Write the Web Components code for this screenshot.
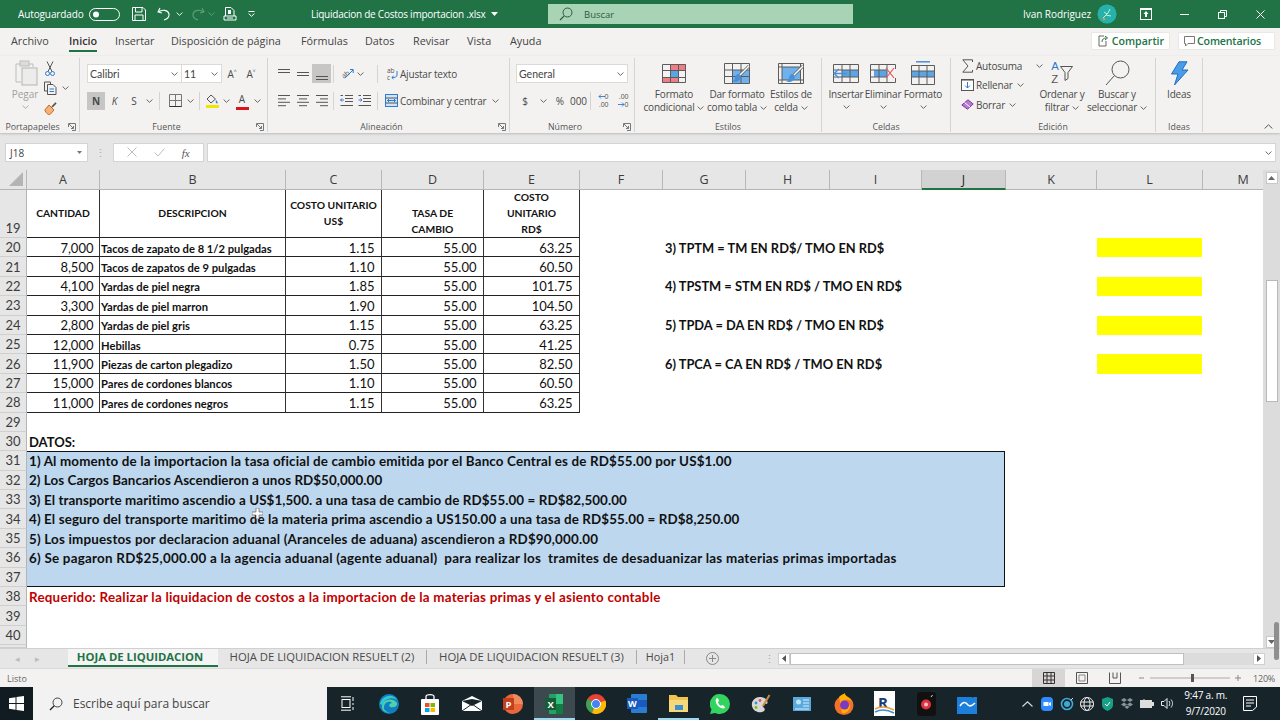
<!DOCTYPE html>
<html lang="es"><head><meta charset="utf-8"><title>Excel</title>
<style>
html,body{margin:0;padding:0;width:1280px;height:720px;overflow:hidden;background:#e6e6e6}
body{display:flex;flex-direction:column;font-family:"Open Sans","Noto Sans",sans-serif;position:relative}
</style></head><body>
<x-titlebar></x-titlebar>
<x-tabs></x-tabs>
<x-ribbon></x-ribbon>
<x-formula></x-formula>
<x-sheet></x-sheet>
<x-sheettabs></x-sheettabs>
<x-status></x-status>
<x-taskbar></x-taskbar>
<script>
const UI='"Open Sans","Noto Sans",sans-serif', CAL='Lato,"Liberation Sans",sans-serif';
function def(name,css,html){customElements.define(name,class extends HTMLElement{
  connectedCallback(){ if(this.shadowRoot) return;
    const s=this.attachShadow({mode:'open'});
    s.innerHTML='<style>'+css+'</style>'+(typeof html==='function'?html(this):html);}
});}
const svg=(w,h,b,extra='')=>`<svg width="${w}" height="${h}" viewBox="0 0 ${w} ${h}" fill="none" ${extra}>${b}</svg>`;
const ch=(c='#666')=>svg(7,4,`<path d="M.6.5 3.5 3.4 6.4.5" stroke="${c}"/>`);
const bx=(w,inner,st='')=>`<span class="bx" style="width:${w}px;${st}">${inner}</span>`;
const sep=(ml,mr)=>`<span class="vs" style="margin:0 ${mr}px 0 ${ml}px"></span>`;

/* ---------- title bar ---------- */
def('x-titlebar',`
:host{display:flex;align-items:center;height:28px;background:#217346;color:#fff;font:10px ${UI};flex:none;box-sizing:border-box;padding-left:18px;white-space:nowrap}
.bx{display:inline-flex;justify-content:center;align-items:center;flex:none}
.sb{width:305px;height:20px;background:#a8d3b4;display:flex;align-items:center;color:#2d5b41;font-size:9.5px;box-sizing:border-box;padding-left:11px;gap:11px;flex:none}
`,()=>`
<span style="width:65px;flex:none;letter-spacing:-.12px">Autoguardado</span>
<span class="bx" style="margin-left:6px;width:31px">${svg(31,13,`<rect x=".5" y=".5" width="30" height="12" rx="6" stroke="#fff"/><circle cx="7" cy="6.5" r="3" fill="#fff"/>`)}</span>
<span class="bx" style="width:14px;margin-left:12px">${svg(14,14,`<path d="M.5.5H11L13.5 3V13.5H.5Z" stroke="#fff"/><path d="M3.5.5V5H10V.5M3 13.5V8H11V13.5" stroke="#fff"/>`)}</span>
<span class="bx" style="width:14px;margin-left:11px">${svg(14,14,`<path d="M3 1 1 5 5 6M1.5 5C5 2 11 3 12 7 12.5 10 10 12 7 13" stroke="#fff" stroke-width="1.1"/>`)}</span>
<span class="bx" style="width:12px;margin-left:2px">${ch('#dfe')}</span>
<span class="bx" style="width:14px;margin-left:6px">${svg(14,14,`<path d="M11 1 13 5 9 6M12.5 5C9 2 3 3 2 7 1.5 10 4 12 7 13" stroke="#5e9c79" stroke-width="1.1"/>`)}</span>
<span class="bx" style="width:10px;margin-left:1px">${ch('#5e9c79')}</span>
<span class="bx" style="width:14px;margin-left:7px">${svg(14,15,`<path d="M2.5.5H8L11 3.5V9M2.5.5V9" stroke="#fff"/><path d="M1 9H13V13H1Z" stroke="#fff"/><path d="M4 11H10" stroke="#fff"/><path d="M5 3H8V7H5Z" fill="#fff"/>`)}</span>
<span class="bx" style="width:12px;margin-left:8px">${svg(7,6,`<path d="M.5.5H6.5M.6 2.5 3.5 5.3 6.4 2.5" stroke="#fff"/>`)}</span>
<span style="margin-left:54px;width:180px;flex:none;letter-spacing:-.25px">Liquidacion de Costos importacion .xlsx</span>
<span class="bx" style="width:7px">${svg(7,4,`<path d="M0 0H7L3.5 4Z" fill="#fff"/>`)}</span>
<span class="sb" style="margin-left:50px">${svg(14,14,`<circle cx="8.5" cy="5.5" r="4.5" stroke="#2d5b41"/><path d="M5.2 8.8 1 13" stroke="#2d5b41" stroke-width="1.2"/>`)}<span>Buscar</span></span>
<span style="margin-left:170px;width:68px;flex:none;letter-spacing:-.05px">Ivan Rodriguez</span>
<span class="bx" style="width:20px;margin-left:6px">${svg(20,20,`<circle cx="10" cy="10" r="9.5" fill="#1aa6a6"/><circle cx="10" cy="10" r="9.5" fill="#2fb9ae" opacity=".6"/><path d="M6 14 11 9 13 5M9 11 14 12M7 8 10 10" stroke="#c6f0d8"/><circle cx="7" cy="15" r="1.3" fill="#e09a3c"/>`)}</span>
<span class="bx" style="width:12px;margin-left:23px">${svg(12,12,`<rect width="12" height="12" fill="#fff"/><rect x="1" y="2" width="10" height="9" fill="#217346"/><path d="M6 3 3.5 6H5V9H7V6H8.5Z" fill="#fff"/>`)}</span>
<span class="bx" style="width:9px;margin-left:28px">${svg(9,1,`<rect width="9" height="1" fill="#fff"/>`)}</span>
<span class="bx" style="width:9px;margin-left:29px">${svg(9,9,`<rect x=".5" y="2.5" width="6" height="6" stroke="#fff"/><path d="M2.5 2.5V.5H8.5V6.5H6.5" stroke="#fff"/>`)}</span>
<span class="bx" style="width:9px;margin-left:29px">${svg(9,9,`<path d="M.5.5 8.5 8.5M8.5.5.5 8.5" stroke="#fff"/>`)}</span>
`);

/* ---------- ribbon tabs ---------- */
def('x-tabs',`
:host{display:flex;align-items:flex-start;height:28px;background:#f3f2f1;color:#444;font:10.8px ${UI};flex:none;box-sizing:border-box;padding-left:11px;white-space:nowrap;position:relative}
.t{display:block;flex:none;height:28px;line-height:26px;box-sizing:border-box}
.on{font-weight:600;color:#333;position:relative}
.on::after{content:"";position:absolute;left:0;width:28px;top:22px;height:2px;background:#217346}
.btn{flex:none;height:18px;margin-top:4px;background:#fff;border:1px solid #e9e8e6;display:flex;align-items:center;justify-content:center;gap:4px;color:#217346;font-weight:600;box-sizing:border-box;font-size:10.6px;border-radius:1px}
`,()=>`
<span class="t" style="width:58px">Archivo</span><span class="t on" style="width:46px">Inicio</span><span class="t" style="width:56px">Insertar</span><span class="t" style="width:130px">Disposición de página</span><span class="t" style="width:64px">Fórmulas</span><span class="t" style="width:48px">Datos</span><span class="t" style="width:54px">Revisar</span><span class="t" style="width:43px">Vista</span><span class="t" style="width:581px">Ayuda</span>
<span class="btn" style="width:79px">${svg(11,12,`<path d="M7 1H2V11H9V6" stroke="#666"/><path d="M5 7C5 4 7 3 9 3M8 1 10.5 3 8 5" stroke="#217346"/>`)}<span>Compartir</span></span>
<span class="btn" style="width:97px;margin-left:8px;gap:2px;letter-spacing:-.15px;justify-content:flex-start;padding-left:5px">${svg(11,11,`<path d="M.5.5H10.5V7.5H4L1.5 10V7.5H.5Z" stroke="#777"/>`)}<span>Comentarios</span></span>
`);

/* ---------- ribbon group ---------- */
def('x-group',`
:host{display:flex;flex-direction:column;height:74px;margin:2px 0 1px;box-sizing:border-box;border-right:1px solid #d6d4d2;flex:none;position:relative}
.c{height:62px;flex:none;display:block}
.l{font:8.8px ${UI};color:#555;text-align:center;line-height:12px;margin-top:1px;white-space:nowrap}
.m{position:absolute;right:3px;bottom:1px;line-height:0}
`,h=>{const e=h.hasAttribute('launch');return `<div class="c"><slot></slot></div><div class="l" style="padding-right:${e?14:0}px">${h.getAttribute('label')}</div>${e?`<span class="m">${svg(8,8,`<path d="M.5 4V.5H7.5V7.5H4M1 1 5.5 5.5M5.5 3V5.5H3" stroke="#777"/>`)}</span>`:''}`;});

/* ---------- big ribbon button ---------- */
def('x-big',`
:host{display:flex;flex-direction:column;align-items:center;flex:none;font:10px/13px ${UI};color:#4a4a4a;white-space:nowrap;letter-spacing:-.2px}
.i{height:30px;display:flex;align-items:center;justify-content:center}
`,()=>`<div class="i"><slot name="icon"></slot></div><slot></slot>`);

const G='#5c5c5c';
const grid=(w,h,fills='',extra='')=>svg(w,h,`${fills}<path d="M.5.5H${w-.5}V${h-.5}H.5ZM.5 ${Math.round(h/3)+.5}H${w-.5}M.5 ${Math.round(2*h/3)+.5}H${w-.5}M${Math.round(w/3)+.5}.5V${h-.5}M${Math.round(2*w/3)+.5}.5V${h-.5}" stroke="${G}"/>${extra}`);
const brush=`<path d="M25 3 16 12" stroke="#666" stroke-width="3"/><path d="M25 3 16 12" stroke="#fff" stroke-width="1.4"/><path d="M15 11C12 11 11 13 11 15 11 17 9 18 8 18 11 20 16 19 17 14Z" fill="#4a90d9"/>`;
function lines(n,x,off){let p='';for(let i=0;i<n;i++){const o=x[i%x.length];p+=`M${o} ${off+i*3+.5}H${14-o}`;}return svg(14,13,`<path d="${p}" stroke="#555"/>`);}
function alignL(kind){let p='';[0,1,2,3].forEach(i=>{const long=i%2===0,w=long?12:8,x=kind==='l'?1:kind==='c'?(14-w)/2:13-w;p+=`M${x} ${i*3.4+1.5}H${x+w}`;});return svg(14,13,`<path d="${p}" stroke="#555"/>`);}
const arL=svg(7,5,`<path d="M7 2.5H1M3 .5 1 2.5 3 4.5" stroke="#2b7cd3" stroke-width=".9"/>`);
const arR=svg(7,5,`<path d="M0 2.5H6M4 .5 6 2.5 4 4.5" stroke="#2b7cd3" stroke-width=".9"/>`);

def('x-ribbon',`
:host{display:flex;height:77px;background:#f3f2f1;flex:none;box-sizing:border-box;position:relative;color:#4a4a4a;font:10px ${UI};box-shadow:0 1px 2px #bbb;z-index:1}
.bx{display:inline-flex;justify-content:center;align-items:center;flex:none;height:18px}
.vs{display:inline-block;width:1px;height:18px;background:#d6d4d2;flex:none}
.r{display:flex;align-items:center;white-space:nowrap;height:19px}
.sel{display:flex;align-items:center;justify-content:space-between;height:19px;background:#fff;border:1px solid #dcdad8;box-sizing:border-box;font:10.5px ${CAL};color:#444;padding:0 3px 0 2px;flex:none}
.tx{letter-spacing:-.2px}
svg{display:block}
.col{display:flex;flex-direction:column}
.top{display:flex;align-items:flex-start}
.cap{position:absolute;right:7px;bottom:4px}
.az{display:flex;align-items:center;gap:1px}
.az b{display:block;font:400 11.3px/13px "Liberation Sans",sans-serif}
.dec{display:flex;flex-direction:column;align-items:flex-end;font:7px/8px "Liberation Sans",sans-serif;color:#555}
.dec span{display:flex;align-items:center}
`,()=>`
<x-group label="Portapapeles" launch style="width:80px"><div class="top">
  <x-big style="width:36px;margin-left:7px;color:#a8a8a8">
    <span slot="icon">${svg(25,26,`<path d="M3 4H8M16 4H20V7M3 4V22H8" stroke="#bdbdbd"/><rect x="7" y="1" width="9" height="5" fill="#ddd" stroke="#bdbdbd"/><rect x="9" y="8" width="15" height="17" fill="#ececec" stroke="#b4b4b4"/>`)}</span>
    <span style="color:#a0a0a0;letter-spacing:0">Pegar</span><span style="line-height:10px;margin-top:4px">${ch('#aaa')}</span></x-big>
  <div class="col">
    <div class="r" style="height:20px">${bx(14,svg(10,15,`<circle cx="2.5" cy="12.5" r="2" stroke="#2b7cd3"/><circle cx="7.5" cy="12.5" r="2" stroke="#2b7cd3"/><path d="M3 10.5 8 .5M7 10.5 2 .5" stroke="#555"/>`))}</div>
    <div class="r" style="height:20px">${bx(14,svg(13,14,`<path d="M.5 1H6.5V3M.5 1V10H3.5" stroke="#555"/><path d="M3.5 3.5H9L12 6.5V13.5H3.5Z" stroke="#555" fill="#f3f2f1"/><path d="M5.5 8H10M5.5 10.5H10" stroke="#2b7cd3"/>`))}${bx(16,ch())}</div>
    <div class="r" style="height:20px">${bx(14,svg(13,13,`<path d="M.8 8 5 3 10 8 6 12.5C4 13 2 11 .8 8Z" fill="#f3b27a" stroke="#c8691c"/><path d="M8 5 12 .8" stroke="#555" stroke-width="1.8"/>`))}</div>
  </div></div></x-group>

<x-group label="Fuente" launch style="width:188px">
  <div class="r" style="margin:6px 0 0 7px"><span class="sel" style="width:95px"><span>Calibri</span>${ch()}</span><span class="sel" style="width:40px;border-left:0"><span>11</span>${ch()}</span>${bx(20,`<span style="font:14px ${UI};color:#444">A</span><span style="font:7px ${UI};margin:-8px 0 0 0;color:#2b7cd3">˄</span>`)}${bx(18,`<span style="font:12px ${UI};color:#444">A</span><span style="font:7px ${UI};margin:-7px 0 0 0;color:#2b7cd3">˅</span>`)}</div>
  <div class="r" style="margin:8px 0 0 7px">
  ${bx(18,`<b style="font:700 12px ${UI};color:#333">N</b>`,'background:#c8c6c4')}${bx(19,`<i style="font:italic 10.5px ${UI};color:#444">K</i>`)}${bx(20,`<span style="font:10.5px ${UI};color:#444;text-decoration:underline">S</span>`)}${bx(10,ch())}${sep(5,4)}${bx(22,svg(13,13,`<path d="M.5.5H12.5V12.5H.5ZM.5 6.5H12.5M6.5.5V12.5" stroke="#777"/><path d="M.5 12.5H12.5" stroke="#333"/>`))}${bx(8,ch())}${sep(5,4)}${bx(17,`<span class="col">${svg(13,10,`<path d="M5 1 1 5 5 9 9.5 5Z" stroke="#555"/><path d="M10 6C11 7 12.5 9 11 9.5 9.5 9 9.5 7.5 10 6Z" fill="#2b7cd3"/>`)}<span style="display:block;width:13px;height:3px;background:#f2e600;margin-top:1px"></span></span>`)}${bx(10,ch())}${bx(22,`<span class="col" style="align-items:center"><span style="font:10.5px/9px ${UI};color:#444">A</span><span style="display:block;width:13px;height:3px;background:#d8151c;margin-top:1px"></span></span>`)}${bx(8,ch())}</div>
</x-group>

<x-group label="Alineación" launch style="width:242px">
  <div class="r" style="margin:6px 0 0 7px">
  ${bx(18,lines(2,[1],2))}${bx(19,lines(2,[1],5))}${bx(19,lines(2,[1],9),'background:#c8c6c4;height:19px')}${sep(2,4)}${bx(18,svg(14,13,`<text x="1" y="10" font-size="7" fill="#555" transform="rotate(-38 5 7)" font-family="${UI}">ab</text><path d="M5 11 13 3M10 2.5H13.2V6" stroke="#2b7cd3"/>`))}${bx(8,ch())}${sep(13,5)}${bx(17,svg(12,14,`<text x="1" y="6" font-size="6.5" fill="#555" font-family="${UI}">ab</text><text x="1" y="13" font-size="6.5" fill="#555" font-family="${UI}">c</text><path d="M11 4V8C11 10 9 10.5 6 10.5M7.5 9 5.8 10.5 7.5 12" stroke="#2b7cd3"/>`))}<span class="tx">Ajustar texto</span></div>
  <div class="r" style="margin:8px 0 0 7px">
  ${bx(18,alignL('l'))}${bx(19,alignL('c'))}${bx(19,alignL('r'))}${sep(2,3)}${bx(18,svg(13,11,`<path d="M5 .5H13M5 3.5H13M5 6.5H13M.5 10.5H13M.5.5H3" stroke="#555"/><path d="M4 5H.5M2 3.5.5 5 2 6.5" stroke="#2b7cd3"/>`))}${bx(18,svg(13,11,`<path d="M5 .5H13M5 3.5H13M5 6.5H13M.5 10.5H13M.5.5H3" stroke="#555"/><path d="M.5 5H4M2.5 3.5 4 5 2.5 6.5" stroke="#2b7cd3"/>`))}${sep(4,5)}${bx(17,svg(13,13,`<rect x=".5" y=".5" width="12" height="12" fill="#cfe4f7" stroke="#2b7cd3"/><path d="M.5 4H12.5M.5 9H12.5" stroke="#555"/><path d="M2.5 6.5H10.5M4 5 2.5 6.5 4 8M9 5 10.5 6.5 9 8" stroke="#2b7cd3"/>`))}<span class="tx" style="width:84px">Combinar y centrar</span><span style="margin-left:8px">${ch()}</span></div>
</x-group>

<x-group label="Número" launch style="width:125px">
  <div class="r" style="margin:6px 0 0 6px"><span class="sel" style="width:112px;font:10px ${UI};color:#444"><span>General</span>${ch()}</span></div>
  <div class="r" style="margin:8px 0 0 6px">${bx(18,`<span style="font:17px ${UI};color:#444">$</span>`)}${bx(14,ch(),'margin-left:2px')}${bx(20,`<span style="font:17px ${UI};color:#444">%</span>`)}${bx(17,`<span style="font:8px ${UI};color:#666;letter-spacing:-.3px">000</span>`)}${sep(3,2)}${bx(20,`<span class="dec"><span>${arL}0</span><span>.00</span></span>`)}${bx(20,`<span class="dec"><span>.00</span><span>${arR}0</span></span>`)}</div>
</x-group>

<x-group label="Estilos" style="width:187px"><div class="top" style="margin-left:5px">
  <x-big style="width:68px"><span slot="icon">${grid(24,19,`<rect width="16" height="6" x="8" y="0" fill="#ee7d85"/><rect x="0" y="13" width="16" height="6" fill="#ee7d85"/><rect x="8" y="6" width="8" height="7" fill="#5ba4e6"/>`)}</span><span>Formato</span><span style="display:flex;align-items:center;gap:3px">condicional ${ch()}</span></x-big>
  <x-big style="width:58px"><span slot="icon">${svg(27,21,`<rect x="8.5" y="7" width="17" height="13" fill="#6fb1ea"/><path d="M.5.5H25.5V20.5H.5ZM.5 7H25.5M.5 13.5H25.5M8.5.5V20.5M17 .5V20.5" stroke="${G}"/>${brush}`)}</span><span>Dar formato</span><span style="display:flex;align-items:center;gap:3px">como tabla ${ch()}</span></x-big>
  <x-big style="width:50px"><span slot="icon">${svg(27,21,`<rect x="4" y="4" width="19" height="13" fill="#6fb1ea"/><path d="M.5.5H25.5V20.5H.5ZM.5 4H25.5M.5 17H25.5M4 .5V20.5M22.5 .5V20.5" stroke="${G}"/>${brush}`)}</span><span>Estilos de</span><span style="display:flex;align-items:center;gap:3px">celda ${ch()}</span></x-big>
</div></x-group>

<x-group label="Celdas" style="width:129px"><div class="top" style="margin-left:4px">
  <x-big style="width:40px"><span slot="icon">${svg(26,19,`<rect x="9" y="6" width="16" height="7" fill="#5ba4e6"/><path d="M.5.5H25.5V18.5H.5ZM.5 6H25.5M.5 13H25.5M9 .5V18.5M17 .5V18.5" stroke="${G}"/><path d="M1 9.5H14M6 5 1 9.5 6 14" stroke="#4a90d9" stroke-width="1.5"/>`)}</span><span>Insertar</span><span style="margin-top:4px">${ch()}</span></x-big>
  <x-big style="width:34px"><span slot="icon">${svg(26,19,`<rect x="4" y="6" width="13" height="7" fill="#5ba4e6"/><path d="M.5.5H25.5M.5 18.5H25.5M.5.5V18.5M25.5.5V5M25.5 14V18.5M.5 6H16M.5 13H16M9 .5V18.5M17 .5V18.5" stroke="${G}"/><path d="M16 4 24 14M24 4 16 14" stroke="#e0555c" stroke-width="1.2"/>`)}</span><span>Eliminar</span><span style="margin-top:4px">${ch()}</span></x-big>
  <x-big style="width:46px"><span slot="icon">${svg(24,24,`<path d="M5 .8H19" stroke="#4a90d9" stroke-width="1.5"/><rect x=".5" y="10" width="23" height="6" fill="#5ba4e6"/><path d="M.5 4.5H23.5V23.5H.5ZM.5 10H23.5M.5 16H23.5M8 4.5V23.5M16 4.5V23.5" stroke="${G}"/>`)}</span><span>Formato</span><span style="margin-top:4px">${ch()}</span></x-big>
</div></x-group>

<x-group label="Edición" style="width:205px"><div class="top" style="margin-left:8px">
  <div class="col" style="width:85px;margin-top:-2px;flex:none">
    <div class="r" style="height:19.5px">${bx(17,svg(11,14,`<path d="M10.5 3V.8H.8L6 7 .8 13.2H10.5V11" stroke="#555"/>`))}<span class="tx">Autosuma</span><span style="margin-left:14px">${ch()}</span></div>
    <div class="r" style="height:19.5px">${bx(17,svg(13,12,`<rect x=".5" y=".5" width="12" height="11" fill="#fff" stroke="#555"/><path d="M.5.8H12.5" stroke="#555" stroke-width="1.5"/><path d="M6.5 3V9M4 6.5 6.5 9 9 6.5" stroke="#2b7cd3"/>`))}<span class="tx">Rellenar</span><span style="margin-left:4px">${ch()}</span></div>
    <div class="r" style="height:19.5px">${bx(17,svg(13,11,`<path d="M7 .8 12.2 5 6.5 10.2 .8 6Z" fill="#b57bd1" stroke="#7d3c9e"/><path d="M3.5 3.5 9 8" stroke="#fff"/>`))}<span class="tx">Borrar</span><span style="margin-left:4px">${ch()}</span></div>
  </div>
  <x-big style="width:36px"><span slot="icon" class="az"><span style="display:block"><b style="color:#2b7cd3">A</b><b style="color:#555">Z</b></span>${svg(13,15,`<path d="M.5.5H12.5L8 6.5V12.5L5 14.5V6.5Z" stroke="#555"/>`)}</span><span>Ordenar y</span><span style="display:flex;align-items:center;gap:3px">filtrar ${ch()}</span></x-big>
  <x-big style="width:74px"><span slot="icon">${svg(25,26,`<circle cx="15.5" cy="9.5" r="8.5" stroke="#555"/><path d="M9.5 15.5 1 25" stroke="#555"/>`)}</span><span>Buscar y</span><span style="display:flex;align-items:center;gap:3px">seleccionar ${ch()}</span></x-big>
</div></x-group>

<x-group label="Ideas" style="width:47px"><x-big><span slot="icon">${svg(19,25,`<path d="M9 .8H17L12 9H18L4.5 24 8 13H1.5Z" fill="#4a9be8" stroke="#1f6fc0"/>`)}</span><span>Ideas</span></x-big></x-group>
<span class="cap">${svg(9,5,`<path d="M.6 4.5 4.5.8 8.4 4.5" stroke="#555"/>`)}</span>
`);

/* ---------- formula bar ---------- */
def('x-formula',`
:host{display:flex;align-items:center;flex:none;height:37px;background:#e6e6e6;box-sizing:border-box;padding:10px 4px 8px 5px;color:#444;font:10px ${UI}}
.b{height:19px;background:#fff;border:1px solid #d4d4d4;box-sizing:border-box;display:flex;align-items:center;flex:none}
`,()=>`
<span class="b" style="width:83px;padding:0 5px 0 4px;justify-content:space-between;font:10.5px ${UI};color:#444"><span>J18</span>${svg(5,3,`<path d="M0 0H5L2.5 3Z" fill="#777"/>`)}</span>
<span style="width:25px;text-align:center;color:#aaa;font-size:11px;flex:none;line-height:12px">⋮</span>
<span class="b" style="width:91px;justify-content:space-around;padding:0 5px"><span>${svg(10,10,`<path d="M.5.5 9.5 9.5M9.5.5.5 9.5" stroke="#bdbdbd"/>`)}</span><span>${svg(11,9,`<path d="M.5 4.5 4 8 10.5.5" stroke="#bdbdbd"/>`)}</span><span style="font:italic 11px 'Liberation Serif',serif;color:#555">fx</span></span>
<span class="b" style="flex:1;margin-left:3px;justify-content:flex-end;padding-right:3px">${ch()}</span>
`);

/* ---------- sheet ---------- */
const COLS=[['A',73],['B',186],['C',96],['D',102],['E',96],['F',83],['G',83],['H',84],['I',92],['J',84],['K',91],['L',106],['M',81]];
const colIx=l=>COLS.findIndex(c=>c[0]===l)+2;
const rowIx=r=>r-17;  /* row 19 -> line 2 */
function cell(c,r,txt,cls='',st=''){return `<div class="cell ${cls}" style="grid-column:${colIx(c)};grid-row:${rowIx(r)};${st}">${txt}</div>`;}
const DATA=[[7000,'Tacos de zapato de 8 1/2 pulgadas','1.15','63.25'],[8500,'Tacos de zapatos de 9 pulgadas','1.10','60.50'],[4100,'Yardas de piel negra','1.85','101.75'],[3300,'Yardas de piel marron','1.90','104.50'],[2800,'Yardas de piel gris','1.15','63.25'],[12000,'Hebillas','0.75','41.25'],[11900,'Piezas de carton plegadizo','1.50','82.50'],[15000,'Pares de cordones blancos','1.10','60.50'],[11000,'Pares de cordones negros','1.15','63.25']];
const NOTES=[['1) Al momento de la importacion la tasa oficial de cambio emitida por el Banco Central es de RD$55.00 por US$1.00',.143],['2) Los Cargos Bancarios Ascendieron a unos RD$50,000.00',.05],['3) El transporte maritimo ascendio a US$1,500. a una tasa de cambio de RD$55.00 = RD$82,500.00',.076],['4) El seguro del transporte maritimo de la materia prima ascendio a US150.00 a una tasa de RD$55.00 = RD$8,250.00',.117],['5) Los impuestos por declaracion aduanal (Aranceles de aduana) ascendieron a RD$90,000.00',.187],['6) Se pagaron RD$25,000.00 a la agencia aduanal (agente aduanal)&nbsp; para realizar los&nbsp; tramites de desaduanizar las materias primas importadas',.238]];
const FORMS=[[20,'3) TPTM = TM EN RD$/ TMO EN RD$'],[22,'4) TPSTM = STM EN RD$ / TMO EN RD$'],[24,'5) TPDA = DA EN RD$ / TMO EN RD$'],[26,'6) TPCA = CA EN RD$ / TMO EN RD$']];
def('x-sheet',`
:host{display:flex;height:478px;flex:none;background:#fff;position:relative;font-family:${CAL};color:#111}
.g{display:grid;width:1263px;height:478px;grid-template-columns:27px ${COLS.map(c=>c[1]+'px').join(' ')};grid-template-rows:20px 48px repeat(21,19.4px) 1fr;flex:none;overflow:hidden}
.cell{display:flex;align-items:center;white-space:nowrap;min-width:0;font-size:12.6px;box-sizing:border-box}
.hc{background:#e6e6e6;justify-content:center;color:#3c3c3c;border-right:1px solid #b8b8b8;border-bottom:1px solid #b4b4b4;font:12.5px ${UI}}
.hc.sel{background:#d2d2d2;border-bottom:2px solid #217346;color:#222}
.rh{background:#e6e6e6;justify-content:center;color:#3c3c3c;border-bottom:1px solid #cfcfcf;border-right:1px solid #b4b4b4;font-size:13px}
.corner{background:#e6e6e6;grid-column:1;grid-row:1;border-right:1px solid #b8b8b8;border-bottom:1px solid #b4b4b4;display:flex;align-items:flex-end;justify-content:flex-end;padding:0 3px 3px 0;box-sizing:border-box}
.n{justify-content:flex-end;padding:1px 6.5px 0 0;border-bottom:1px solid #222;border-right:1px solid #333;font-size:13px}
.d{font-weight:700;font-size:11.2px;padding-left:1px;border-bottom:1px solid #222;border-right:1px solid #333;padding-top:2px}
.th{font-weight:700;font-size:10.3px;flex-direction:column;justify-content:center;text-align:center;line-height:16px;border-bottom:1px solid #222;border-right:1px solid #333;padding-bottom:2px}
.b{font-weight:700;font-size:13.4px;overflow:visible;padding-left:2px}
.f{font-weight:700;font-size:12.85px;overflow:visible;padding-left:2px}
.box{grid-column:2/12;grid-row:14/21;background:#bdd7ee;border:1px solid #111;border-left:0;box-sizing:border-box;margin-right:1px}
.y{background:#ffff00;margin-right:1px}
.vs{width:17px;flex:none;background:#dcdcdc;position:relative;display:flex;flex-direction:column;align-items:center}
.ar{width:12px;height:12px;background:#fff;border:1px solid #c8c8c8;box-sizing:border-box;display:flex;align-items:center;justify-content:center;flex:none}
.th1{width:12px;background:#fff;border:1px solid #b8b8b8;box-sizing:border-box;flex:none;height:122px;margin-top:96px}
.cur{position:absolute;left:252px;top:333px}
.blob{position:absolute;left:1274px;top:452px;width:5px;height:38px;border-radius:3px;background:#8f8f8f}
`,()=>{
 let h='<div class="corner">'+svg(14,14,'<path d="M14 0V14H0Z" fill="#b4b4b4"/>')+'</div>';
 COLS.forEach(([c])=>h+=`<div class="cell hc ${c==='J'?'sel':''}" style="grid-column:${colIx(c)};grid-row:1">${c}</div>`);
 for(let r=19;r<=40;r++) h+=`<div class="cell rh" style="grid-column:1;grid-row:${rowIx(r)};${r===19?'align-items:flex-end;padding-bottom:1px':''}">${r}</div>`;
 h+=`<div class="cell rh" style="grid-column:1;grid-row:${rowIx(41)}"></div>`;
 h+=cell('A',19,'CANTIDAD','th')+cell('B',19,'DESCRIPCION','th')+cell('C',19,'<span>COSTO UNITARIO</span><span>US$</span>','th','padding-bottom:1px')+cell('D',19,'<span>TASA DE</span><span>CAMBIO</span>','th','padding:14px 0 0')+cell('E',19,'<span>COSTO</span><span>UNITARIO</span><span>RD$</span>','th');
 DATA.forEach((d,i)=>{const r=20+i;h+=cell('A',r,d[0].toLocaleString('en-US'),'n','padding-right:5.5px')+cell('B',r,d[1],'d')+cell('C',r,d[2],'n')+cell('D',r,'55.00','n')+cell('E',r,d[3],'n');});
 FORMS.forEach(([r,t])=>{h+=cell('G',r,t,'f')+cell('L',r,'','y');});
 h+=cell('A',30,'DATOS:','b','font-size:13px');
 h+='<div class="box"></div>';
 NOTES.forEach(([t,ls],i)=>h+=cell('A',31+i,t,'b',`letter-spacing:${ls}px`));
 h+=cell('A',38,'Requerido: Realizar la liquidacion de costos a la importacion de la materias primas y el asiento contable','b','color:#c00000;letter-spacing:.23px');
 return `<div class="g">${h}</div><div class="vs"><div class="ar" style="margin-top:2px">${svg(7,4,'<path d="M0 4H7L3.5 0Z" fill="#666"/>')}</div><div class="th1"></div><div class="ar" style="margin-top:auto">${svg(7,4,'<path d="M0 0H7L3.5 4Z" fill="#666"/>')}</div></div><span class="blob"></span><span class="cur">${svg(11,11,'<path d="M4 0H7V4H11V7H7V11H4V7H0V4H4Z" fill="#fff" stroke="#666" stroke-width=".7"/>')}</span>`;
});

/* ---------- sheet tabs ---------- */
def('x-sheettabs',`
:host{display:flex;align-items:center;height:20px;flex:none;background:#e6e6e6;color:#4a4a4a;font:11.3px ${UI};white-space:nowrap;border-top:1px solid #d0d0d0;box-sizing:border-box}
.t{flex:none;height:18px;align-self:flex-start;display:flex;align-items:center;justify-content:center;box-sizing:border-box;padding-bottom:3px}
.a{background:#f4f4f4;color:#217346;font-weight:700;border-bottom:2px solid #217346;font-size:11.3px;padding:0 6px 1px 0}
.s{width:1px;height:14px;background:#aaa;flex:none;align-self:flex-start;margin-top:1px}
.hs{display:flex;align-items:center;flex:none;height:12px}
.ar{width:12px;height:12px;background:#fff;border:1px solid #cfcfcf;box-sizing:border-box;display:flex;align-items:center;justify-content:center;flex:none}
`,()=>`
<span style="width:68px;flex:none;color:#bbb;font-size:9px;display:flex;gap:15px;padding-left:15px;box-sizing:border-box"><span>◂</span><span>▸</span></span>
<span class="t a" style="width:150px">HOJA DE LIQUIDACION</span>
<span class="t" style="width:208px">HOJA DE LIQUIDACION RESUELT (2)</span><span class="s"></span>
<span class="t" style="width:209px">HOJA DE LIQUIDACION RESUELT (3)</span><span class="s"></span>
<span class="t" style="width:47px;font-size:10.8px">Hoja1</span><span class="s"></span>
<span style="width:55px;flex:none;display:flex;justify-content:center">${svg(13,13,`<circle cx="6.5" cy="6.5" r="6" stroke="#888"/><path d="M6.5 3V10M3 6.5H10" stroke="#888"/>`)}</span>
<span style="width:38px;flex:none;color:#aaa;box-sizing:border-box;padding-left:24px">⋮</span>
<span class="hs" style="width:487px;background:#dcdcdc"><span class="ar">${svg(4,7,'<path d="M4 0V7L0 3.5Z" fill="#555"/>')}</span><span style="width:394px;height:12px;background:#fff;border:1px solid #c0c0c0;box-sizing:border-box"></span><span class="ar" style="margin-left:auto">${svg(4,7,'<path d="M0 0V7L4 3.5Z" fill="#555"/>')}</span></span>
`);

/* ---------- status bar ---------- */
def('x-status',`
:host{display:flex;align-items:center;height:19px;flex:none;background:#f3f2f1;color:#666;font:9px ${UI};box-sizing:border-box;padding-left:7px;border-top:1px solid #dadada}
.v{width:33px;height:18px;display:flex;align-items:center;justify-content:center;flex:none}
`,()=>`
<span style="width:1025px;flex:none">Listo</span>
<span class="v" style="background:#d8d6d4">${svg(12,12,`<path d="M.5.5H11.5V11.5H.5ZM.5 4H11.5M.5 8H11.5M4 .5V11.5M8 .5V11.5" stroke="#333"/>`)}</span>
<span class="v">${svg(12,12,`<path d="M.5.5H11.5V11.5H.5Z" stroke="#555"/><path d="M3 3H9V9H3Z" stroke="#888"/>`)}</span>
<span class="v">${svg(12,12,`<path d="M.5.5V11.5H11.5V.5M4 .5V6H8V.5" stroke="#555"/>`)}</span>
<span style="flex:none;margin-left:8px;color:#888;display:flex;align-items:center">${svg(102,10,`<path d="M0 5H5M96 5H102M99 2V8" stroke="#888"/><path d="M11 5H91" stroke="#aaa"/><rect x="52" y="1" width="3" height="8" fill="#555"/>`)}</span>
<span style="margin-left:12px;flex:none;letter-spacing:-.2px">120%</span>
`);

/* ---------- taskbar ---------- */
def('x-taskbar',`
:host{display:flex;height:33px;flex:none;background:#17252b;color:#fff;font:10.5px ${UI};position:relative;box-sizing:border-box}
.st{width:33px;flex:none;display:flex;align-items:center;justify-content:center;background:#101c22}
.se{width:294px;flex:none;background:#f2f2f2;color:#444;display:flex;align-items:center;font-size:12px;padding-left:16px;box-sizing:border-box;gap:10px;letter-spacing:-.02px}
.tray{display:flex;align-items:center;flex:none;height:33px}
.tray span{width:20px;display:flex;justify-content:center}
.i{display:flex;width:41.33px;height:33px;align-items:center;justify-content:center;flex:none}
.act{background:#3c494e;box-shadow:inset 0 -2px #9fd8ee}
.und{box-shadow:inset 0 -2px 0 #9fd8ee}
.clock{text-align:center;line-height:16px;font-size:10px;letter-spacing:-.2px;flex:none;width:60px}
svg text{font-family:${UI}}
`,()=>`
<span class="st">${svg(15,15,`<path d="M0 2.2 6.5 1.3V7H0ZM7.5 1.1 15 0V7H7.5ZM0 8H6.5V13.7L0 12.8ZM7.5 8H15V15L7.5 13.9Z" fill="#fff"/>`)}</span>
<span class="se">${svg(14,14,`<circle cx="8.5" cy="5.5" r="4.5" stroke="#444"/><path d="M5.2 8.8 1 13" stroke="#222" stroke-width="1.3"/>`)}<span>Escribe aquí para buscar</span></span>
<span class="i">${svg(13,15,`<rect x="1" y="3.5" width="8" height="8" stroke="#fff"/><path d="M0 .8H10M0 14.2H10M12 1V5M12 7V9M12 11V14" stroke="#fff"/>`)}</span>
<span class="i">${svg(20,20,`<circle cx="10" cy="10" r="10" fill="#0f7fc4"/><path d="M3 12C4 5 14 3 18 9 19 12 15 14 11 13 9 11 11 9 13 9 11 6 4 8 5 15 7 19 13 20 17 17 11 21 2 18 3 12Z" fill="#4fd1a5"/><path d="M1 10C2 3 13-3 19 7 16 3 6 3 4 11Z" fill="#36c6d0"/>`)}</span>
<span class="i">${svg(18,22,`<path d="M5 6V3.5C5 1 13 1 13 3.5V6" stroke="#fff" stroke-width="1.3"/><rect y="6" width="18" height="16" rx="1" fill="#fff"/><rect x="4" y="10" width="4.5" height="4" fill="#f25022"/><rect x="9.5" y="10" width="4.5" height="4" fill="#7fba00"/><rect x="4" y="15" width="4.5" height="4" fill="#00a4ef"/><rect x="9.5" y="15" width="4.5" height="4" fill="#ffb900"/>`)}</span>
<span class="i">${svg(20,15,`<path d="M0 5 10 0 20 5V15H0Z" fill="#fff"/><path d="M0 5 10 10 20 5 10 3Z" fill="#17252b"/><path d="M0 15 10 8 20 15" stroke="#17252b"/>`)}</span>
<span class="i">${svg(20,20,`<circle cx="10" cy="10" r="10" fill="#e8673c"/><path d="M10 0A10 10 0 0 1 20 10H10Z" fill="#f08a5d"/><path d="M0 4H11V16H0Z" fill="#c43e1c"/><text x="2.6" y="13.5" font-size="9.5" font-weight="700" fill="#fff">P</text>`)}</span>
<span class="i act">${svg(18,20,`<rect x="4" width="14" height="20" rx="1" fill="#21a366"/><rect x="11" width="7" height="10" fill="#33c481"/><rect x="11" y="10" width="7" height="10" fill="#107c41"/><rect y="4" width="11" height="12" fill="#185c37"/><text x="2.5" y="13.5" font-size="9.5" font-weight="700" fill="#fff">X</text>`)}</span>
<span class="i">${svg(20,20,`<circle cx="10" cy="10" r="10" fill="#ea4335"/><path d="M10 10 1.5 5A10 10 0 0 0 6 19Z" fill="#34a853"/><path d="M19.5 6.5A10 10 0 0 1 6 19L10 10Z" fill="#fbbc05"/><circle cx="10" cy="10" r="4.5" fill="#4285f4" stroke="#fff"/>`)}</span>
<span class="i">${svg(20,19,`<rect x="4" width="16" height="19" rx="1" fill="#2b7cd3"/><rect x="10" y="6" width="10" height="7" fill="#185abd"/><rect y="4" width="11" height="11" fill="#185abd"/><text x="1" y="12.8" font-size="9" font-weight="700" fill="#fff">W</text>`)}</span>
<span class="i und">${svg(19,19,`<path d="M0 1H7L9 3H19V18H0Z" fill="#f3c34f"/><rect y="6" width="19" height="12" fill="#f6d77a"/><rect x="6" y="11" width="8" height="5" fill="#3e8fd0"/>`)}</span>
<span class="i">${svg(20,20,`<path d="M10 0A10 10 0 0 1 10 20C8 20 6 19.5 5 19L0 20 1.5 15.5A10 10 0 0 1 10 0Z" fill="#32d35f"/><path d="M6 5C5 7 6 10 8 12 10 14 13 15 15 14 15 12 13 11 12 11L11 12C9 11 8 9 8 8L9 7C9 6 8 4 7 4Z" fill="#fff"/>`)}</span>
<span class="i">${svg(20,20,`<path d="M9 3C4 3 0 7 1 12 2 17 7 19 11 18 15 17 14 14 12 13 11 12 13 9 16 10 18 7 14 3 9 3Z" fill="#d8d8d8"/><circle cx="5" cy="9" r="1.4" fill="#3e8fd0"/><circle cx="9" cy="6.5" r="1.4" fill="#e0555c"/><circle cx="5" cy="13.5" r="1.4" fill="#7fba00"/><path d="M12 12 18.5 1" stroke="#c98a3c" stroke-width="2"/>`)}</span>
<span class="i">${svg(18,14,`<rect width="18" height="14" fill="#5aa9dd"/><circle cx="5.5" cy="5" r="2.5" fill="#bfe3f7"/><path d="M10 3H16M10 6H16M10 9H16M2 12H16" stroke="#d6eefb"/>`)}</span>
<span class="i">${svg(20,22,`<circle cx="10" cy="12.5" r="9.5" fill="#f3702a"/><path d="M5 4C8 1 10 1 11 0 10 3 16 3 19 11 18 8 15 6 11 7 8 7 6 10 8 13 10 16 15 15 16 11 17 16 13 21 8 20" fill="#ffb000"/><circle cx="10.5" cy="12" r="4.5" fill="#7a3bc2"/>`)}</span>
<span class="i">${svg(21,25,`<rect width="21" height="25" fill="#fff"/><text x="4" y="16.5" font-size="15" font-weight="700" fill="#1b3a7a">R</text><path d="M1 18C7 15 14 16 20 19" stroke="#f0a030" stroke-width="1.5"/><path d="M1 21C7 18 14 19 20 22" stroke="#3e8fd0" stroke-width="1.5"/>`)}</span>
<span class="i">${svg(19,24,`<rect width="19" height="24" rx="3" fill="#111"/><circle cx="9" cy="12.5" r="5" fill="#e0323c"/><circle cx="9" cy="12.5" r="2" fill="#fff" opacity=".7"/><path d="M14 5 15.5 3" stroke="#ddd"/>`)}</span>
<span class="i">${svg(21,20,`<rect y="3" width="20" height="17" fill="#1c7fdb"/><path d="M3 12C6 7 9 8 11 11 13 13 15 12 18 9" stroke="#fff" stroke-width="1.6"/><path d="M15 3 19 0" stroke="#222" stroke-width="2"/>`)}</span>
<span class="tray" style="margin-left:29px">
 <span>${svg(11,6,`<path d="M.5 5.5 5.5.8 10.5 5.5" stroke="#ddd" stroke-width="1.1"/>`)}</span>
 <span>${svg(12,14,`<rect width="12" height="14" rx="4" fill="#2d8cff"/><rect x="2.5" y="5" width="5" height="4" fill="#fff"/><path d="M8 6 10 5V9L8 8Z" fill="#fff"/>`)}</span>
 <span>${svg(14,14,`<circle cx="7" cy="7" r="5.5" stroke="#3fa9d6" stroke-width="1.6"/><circle cx="7" cy="7" r="3" fill="#3fa9d6"/><path d="M11 3 13 1" stroke="#ddd"/>`)}</span>
 <span>${svg(14,14,`<circle cx="7" cy="7" r="6.5" stroke="#eee"/><ellipse cx="7" cy="7" rx="3" ry="6.5" stroke="#eee"/><path d="M.5 5H13.5M.5 9H13.5" stroke="#eee"/>`)}</span>
 <span>${svg(11,14,`<path d="M5.5 0 11 2V8C11 11 8 13 5.5 14 3 13 0 11 0 8V2Z" fill="#17a086"/><path d="M3 7 5 9 8 5" stroke="#fff"/>`)}</span>
 <span>${svg(12,11,`<path d="M3 0 6 2 3 4 0 2ZM9 0 12 2 9 4 6 2ZM3 4.5 6 6.5 3 8.5 0 6.5ZM9 4.5 12 6.5 9 8.5 6 6.5ZM3.5 9 6 7.5 8.5 9 6 11Z" fill="#8a9296"/>`)}</span>
 <span>${svg(14,9,`<rect y="1" width="12" height="8" fill="#ddd"/><rect x="12" y="3" width="2" height="4" fill="#ddd"/><path d="M3 0H5" stroke="#ddd"/>`)}</span>
 <span>${svg(13,13,`<path d="M.5 4.5H3L6 1.5V11.5L3 8.5H.5Z" stroke="#eee"/><path d="M8 4C9 5.5 9 7.5 8 9M10 2.5C12 5 12 8 10 10.5" stroke="#eee"/>`)}</span>
</span>
<span class="clock" style="margin-left:-1.5px">9:47 a. m.<br>9/7/2020</span>
<span style="width:16px;display:flex;align-items:center;margin-left:7.5px;flex:none">${svg(14,15,`<path d="M.5.5H13.5V11L9.5 14.5H.5Z" stroke="#fff"/><path d="M3 4H11M3 7H11M3 10H8" stroke="#fff"/>`)}</span>
`);
</script>
</body></html>
